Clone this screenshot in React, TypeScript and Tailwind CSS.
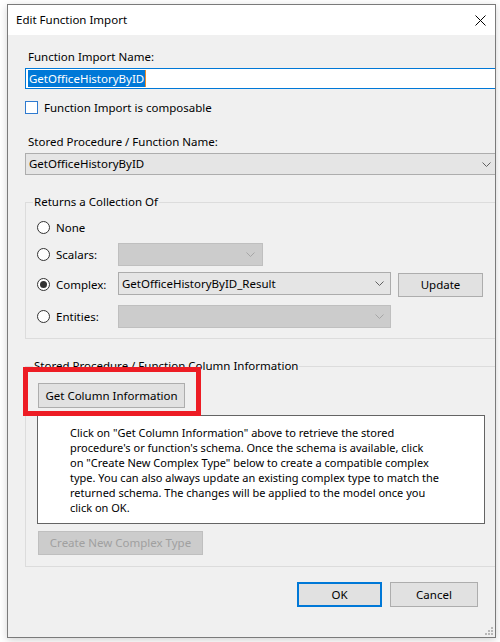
import React from 'react';

const font = "font-['Noto_Sans','Liberation_Sans',sans-serif]";

function Chevron({ disabled }: { disabled?: boolean }) {
    return (
        <svg width="9" height="5" viewBox="0 0 9 5" className="shrink-0">
            <polyline
                points="0.5,0.5 4.5,4.5 8.5,0.5"
                fill="none"
                stroke={disabled ? '#a6a6a6' : '#606060'}
                strokeWidth="1"
            />
        </svg>
    );
}

function Radio({ checked }: { checked?: boolean }) {
    return (
        <span className="w-[13px] h-[13px] rounded-full border border-[#333333] bg-white flex items-center justify-center shrink-0">
            {checked && <span className="w-[7px] h-[7px] rounded-full bg-[#333333]" />}
        </span>
    );
}

export default function App() {
    return (
        <div className={`w-[500px] h-[642px] bg-white pt-[4px] pl-[7px] ${font} text-[11.5px] leading-[16px] text-black`}>
            <div className="relative w-[489px] h-[634px] border border-[#7a7a7a] bg-[#f0f0f0] flex flex-col overflow-hidden shadow-[0_2px_8px_rgba(0,0,0,0.18)]">
                {/* Title bar */}
                <div className="h-[30px] bg-white flex items-center justify-between pl-[8px] pr-[8px] shrink-0">
                    <span className="text-[11.5px]">Edit Function Import</span>
                    <svg width="11" height="11" viewBox="0 0 11 11" className="mr-[1px]">
                        <path d="M0.5 0.5 L10.5 10.5 M10.5 0.5 L0.5 10.5" stroke="#000" strokeWidth="1" />
                    </svg>
                </div>

                {/* Client area */}
                <div className="flex flex-col pl-[17px]">
                    <div className="mt-[14px] ml-[3px]">Function Import Name:</div>
                    <div className="mt-[3px] w-[471px] h-[21px] border border-[#0078d7] bg-white flex items-center pl-[2px]">
                        <span className="bg-[#0078d7] text-white h-[17px] leading-[17px] px-[1px]">GetOfficeHistoryByID</span>
                        <span className="w-[1px] h-[17px] bg-[#f08a24]" />
                    </div>

                    <div className="mt-[12px] flex items-center gap-[6px] h-[13px]">
                        <span className="w-[13px] h-[13px] border border-[#2f7bd0] bg-white shrink-0" />
                        <span>Function Import is composable</span>
                    </div>

                    <div className="mt-[20px] ml-[3px]">Stored Procedure / Function Name:</div>
                    <div className="mt-[3px] w-[471px] h-[22px] border border-[#adadad] bg-[#e5e5e5] flex items-center justify-between pl-[3px] pr-[4px]">
                        <span>GetOfficeHistoryByID</span>
                        <Chevron />
                    </div>

                    {/* Returns a Collection Of */}
                    <fieldset className="mt-[19px] w-[471px] border border-[#dcdcdc] pb-[10px]">
                        <legend className="ml-[7px] px-[1px]">Returns a Collection Of</legend>
                        <div className="mt-[6px] h-[23px] flex items-center pl-[11px]">
                            <div className="w-[81px] flex items-center gap-[6px]">
                                <Radio />
                                <span>None</span>
                            </div>
                        </div>
                        <div className="mt-[4px] h-[23px] flex items-center pl-[11px]">
                            <div className="w-[81px] flex items-center gap-[6px]">
                                <Radio />
                                <span>Scalars:</span>
                            </div>
                            <div className="w-[145px] h-[23px] border border-[#bfbfbf] bg-[#cccccc] flex items-center justify-end pr-[7px]">
                                <Chevron disabled />
                            </div>
                        </div>
                        <div className="mt-[6px] h-[25px] flex items-start pl-[11px]">
                            <div className="w-[81px] h-[23px] flex items-center gap-[6px] mt-[1px]">
                                <Radio checked />
                                <span>Complex:</span>
                            </div>
                            <div className="w-[273px] h-[23px] border border-[#acacac] bg-[#e5e5e5] flex items-center justify-between pl-[3px] pr-[6px]">
                                <span>GetOfficeHistoryByID_Result</span>
                                <Chevron />
                            </div>
                            <button className="ml-[7px] mt-[1px] w-[85px] h-[24px] border border-[#adadad] bg-[#e1e1e1] flex items-center justify-center">
                                Update
                            </button>
                        </div>
                        <div className="mt-[8px] h-[23px] flex items-center pl-[11px]">
                            <div className="w-[81px] flex items-center gap-[6px]">
                                <Radio />
                                <span>Entities:</span>
                            </div>
                            <div className="w-[273px] h-[23px] border border-[#bfbfbf] bg-[#cccccc] flex items-center justify-end pr-[6px]">
                                <Chevron disabled />
                            </div>
                        </div>
                    </fieldset>

                    {/* Column Information */}
                    <fieldset className="mt-[19px] w-[471px] border border-[#dcdcdc] pb-[11px] pl-[12px]">
                        <legend className="ml-[-5px] px-[1px]">Stored Procedure / Function Column Information</legend>
                        <button className="mt-[9px] w-[147px] h-[25px] border border-[#adadad] bg-[#e1e1e1] flex items-center justify-center">
                            Get Column Information
                        </button>
                        <div className="mt-[7px] -ml-[1px] w-[448px] h-[109px] border border-[#646464] bg-white pt-[9px] pl-[32px] text-[11px] leading-[15px] whitespace-nowrap">
                            <div>Click on "Get Column Information" above to retrieve the stored</div>
                            <div>procedure's or function's schema. Once the schema is available, click</div>
                            <div>on "Create New Complex Type" below to create a compatible complex</div>
                            <div>type. You can also always update an existing complex type to match the</div>
                            <div>returned schema. The changes will be applied to the model once you</div>
                            <div>click on OK.</div>
                        </div>
                        <button className="mt-[7px] w-[165px] h-[24px] border border-[#bfbfbf] bg-[#cccccc] text-[#a0a0a0] flex items-center justify-center">
                            Create New Complex Type
                        </button>
                    </fieldset>

                    {/* Dialog buttons */}
                    <div className="mt-[15px] flex justify-end gap-[8px] pr-[17px]">
                        <button className="w-[85px] h-[25px] border-2 border-[#0078d7] bg-[#e1e1e1] flex items-center justify-center">
                            OK
                        </button>
                        <button className="w-[88px] h-[25px] border border-[#adadad] bg-[#e1e1e1] flex items-center justify-center">
                            Cancel
                        </button>
                    </div>
                </div>

                {/* highlight around Get Column Information */}
                <div className="absolute left-[15px] top-[362px] w-[178px] h-[49px] border-[5px] border-[#ed1c24]" />

                {/* size grip */}
                <svg width="8" height="8" viewBox="0 0 8 8" className="absolute right-[2px] bottom-[2px]">
                    <rect x="6" y="0" width="2" height="2" fill="#b8b8b8" />
                    <rect x="3" y="3" width="2" height="2" fill="#b8b8b8" />
                    <rect x="6" y="3" width="2" height="2" fill="#b8b8b8" />
                    <rect x="0" y="6" width="2" height="2" fill="#b8b8b8" />
                    <rect x="3" y="6" width="2" height="2" fill="#b8b8b8" />
                    <rect x="6" y="6" width="2" height="2" fill="#b8b8b8" />
                </svg>
            </div>
        </div>
    );
}
